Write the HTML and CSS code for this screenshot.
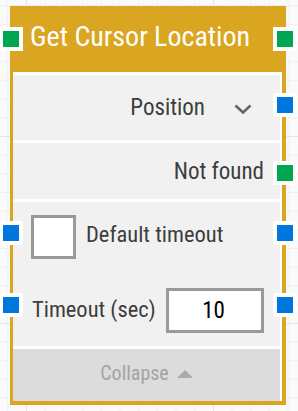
FILE: index.html
```html
<!DOCTYPE html>
<html>
<head>
<meta charset="utf-8">
<link rel="stylesheet" href="styles.css">
</head>
<body>
<div class="node">
  <div class="header">
    <span class="port port-exec port-left-h"></span>
    <span class="title">Get Cursor Location</span>
    <span class="port port-exec port-right-h"></span>
  </div>
  <div class="body">
    <div class="panel row-select">
      <span class="label">Position</span>
      <svg class="chevron" width="18" height="10" viewBox="0 0 18 10"><polyline points="1.5,1.5 9,8.5 16.5,1.5" fill="none" stroke="#666" stroke-width="2.6"/></svg>
      <span class="port port-data port-right"></span>
    </div>
    <div class="panel row-output">
      <span class="label">Not found</span>
      <span class="port port-exec port-right"></span>
    </div>
    <div class="panel panel-inputs">
      <div class="field field-check">
        <span class="port port-data port-left port-check"></span>
        <span class="checkbox"></span>
        <span class="label">Default timeout</span>
        <span class="port port-data port-right port-check"></span>
      </div>
      <div class="field field-timeout">
        <span class="port port-data port-left port-time"></span>
        <span class="label">Timeout (sec)</span>
        <span class="number">10</span>
        <span class="port port-data port-right port-time"></span>
      </div>
    </div>
    <div class="collapse">
      <span class="collapse-label">Collapse</span>
      <svg class="tri" width="16" height="8" viewBox="0 0 16 8"><polygon points="0,8 8,0 16,8" fill="#aaa"/></svg>
    </div>
  </div>
</div>
</body>
</html>
```
FILE: styles.css
```css
html, body {
  margin: 0;
  padding: 0;
}
body {
  width: 298px;
  height: 411px;
  overflow: hidden;
  background-color: #fafafa;
  background-image:
    linear-gradient(to right, #e4e4e4 1px, transparent 1px),
    linear-gradient(to bottom, #e4e4e4 1px, transparent 1px),
    linear-gradient(to right, #f0f0f0 1px, transparent 1px),
    linear-gradient(to bottom, #f0f0f0 1px, transparent 1px);
  background-size: 187px 187px, 187px 187px, 18.7px 18.7px, 18.7px 18.7px;
  background-position: 26px 0, 0 136px, 7.3px 0, 0 5.1px;
  font-family: Roboto, "Noto Sans", sans-serif;
  font-stretch: 87.5%;
  color: #3d3d3d;
}
.node {
  margin: 6px 0 0 10px;
  width: 276px;
  box-sizing: border-box;
  border-left: 3px solid #daa520;
  border-right: 4px solid #daa520;
  border-bottom: 4px solid #daa520;
  background: #fff;
}
.header {
  position: relative;
  height: 66px;
  background: #daa520;
  display: flex;
  align-items: center;
  padding-left: 17px;
}
.title {
  color: #fff;
  font-size: 28px;
  line-height: 1;
  margin-top: -4px;
}
.body {
  display: flex;
  flex-direction: column;
  gap: 3px;
  padding: 3px 2px 0 0;
}
.panel {
  position: relative;
  background: #f1f1f1;
}
.label {
  font-size: 23px;
  line-height: 1;
}
.row-select {
  height: 65px;
  display: flex;
  align-items: center;
  justify-content: flex-end;
  padding-right: 28px;
  gap: 29px;
}
.chevron {
  display: block;
  margin-top: 2px;
}
.row-output {
  height: 56px;
  display: flex;
  align-items: center;
  justify-content: flex-end;
  padding-right: 16px;
}
.panel-inputs {
  display: flex;
  flex-direction: column;
  gap: 29px;
  padding: 13px 16px 13px 18px;
}
.field {
  position: relative;
  display: flex;
  align-items: center;
}
.field .label {
  font-size: 22.5px;
}
.field-check {
  height: 44px;
  gap: 10px;
}
.field-check .label {
  margin-top: -6px;
}
.checkbox {
  width: 45px;
  height: 44px;
  box-sizing: border-box;
  border: 3px solid #999;
  background: #fff;
}
.field-timeout {
  height: 45px;
  justify-content: space-between;
  padding-left: 1px;
}
.field-timeout .label {
  margin-top: -2px;
}
.number {
  width: 98px;
  height: 45px;
  box-sizing: border-box;
  border: 3px solid #999;
  background: #fff;
  color: #000;
  font-size: 23px;
  display: flex;
  align-items: center;
  justify-content: center;
  padding-right: 3px;
}
.collapse {
  height: 52px;
  background: #dcdcdc;
  display: flex;
  align-items: center;
  justify-content: center;
  gap: 8px;
}
.collapse-label {
  color: #a3a3a3;
  font-size: 20px;
  margin-top: -4px;
}
.tri {
  display: block;
  margin-top: -2px;
}
.port {
  position: absolute;
  width: 24px;
  height: 24px;
  box-sizing: border-box;
  border: 4px solid #fff;
}
.port-exec { background: #00a650; }
.port-data { background: #0077dd; }
.port-left-h { left: -14px; top: 21px; }
.port-right-h { right: -15px; top: 21px; }
.port-right { right: -17px; top: 18px; }
.row-output .port-right { top: 18px; }
.port-left { left: -14px; }
.field .port-left { left: -32px; }
.field .port-right { right: -33px; }
.port-check { top: 6px; }
.port-time { top: 5px; }
```
